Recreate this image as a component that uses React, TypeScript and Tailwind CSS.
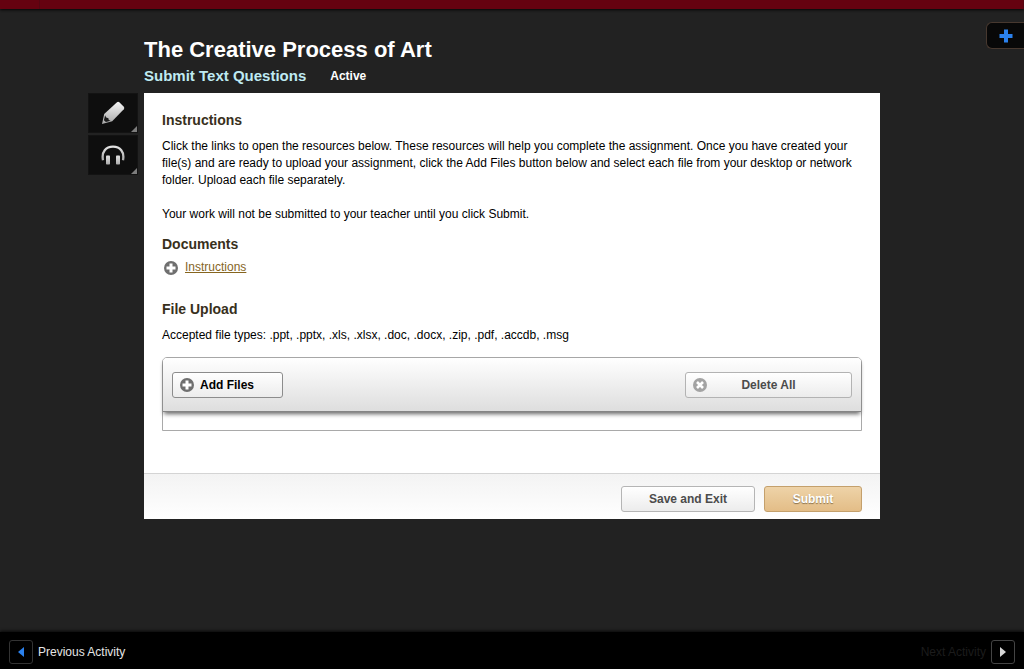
import { useState } from 'react';
import type { ReactNode } from 'react';

const FILE_TYPES = ['.ppt', '.pptx', '.xls', '.xlsx', '.doc', '.docx', '.zip', '.pdf', '.accdb', '.msg'];

// Icons
function PlusCircle() {
  return (
    <svg viewBox="0 0 14 14" className="w-[14px] h-[14px] shrink-0" aria-hidden="true">
      <circle cx="7" cy="7" r="7" fill="#6f6f6f" />
      <path d="M5.5 2.5h3v3h3v3h-3v3h-3v-3h-3v-3h3z" fill="#fff" />
    </svg>
  );
}

function CloseCircle() {
  return (
    <svg viewBox="0 0 14 14" className="w-[14px] h-[14px] shrink-0" aria-hidden="true">
      <circle cx="7" cy="7" r="7" fill="#a3a3a3" />
      <path d="M4 4l6 6M10 4l-6 6" stroke="#fff" strokeWidth="2.6" />
    </svg>
  );
}

function PencilIcon() {
  return (
    <svg viewBox="0 0 24 24" className="w-6 h-6" aria-hidden="true">
      <defs>
        <linearGradient id="pencil" x1="0" y1="0" x2="0" y2="1">
          <stop offset="0" stopColor="#f6f6f6" />
          <stop offset="1" stopColor="#a6a6a6" />
        </linearGradient>
      </defs>
      <path d="M16 1.2Q17.2.3 18.3 1.3L22.8 5.8Q23.8 7 22.8 8.2L11.2 20.2 1 23 3.2 13z" fill="url(#pencil)" />
      <path d="M4.1 14.2L2.9 19.2 4.9 21.1 9.6 19.8 7.8 19.1 7.4 17.2 5.2 16.6z" fill="#1c1c1c" />
    </svg>
  );
}

function HeadphonesIcon() {
  return (
    <svg viewBox="0 0 24 20" className="w-6 h-5" aria-hidden="true">
      <defs>
        <linearGradient id="phones" x1="0" y1="0" x2="0" y2="1">
          <stop offset="0" stopColor="#e2e2e2" />
          <stop offset="1" stopColor="#aaaaaa" />
        </linearGradient>
      </defs>
      <path d="M2 15.2C.3 6.500 5 1.700 12 1.700s11.700 4.800 10 13.500" fill="none" stroke="url(#phones)" strokeWidth="2.300" />
      <rect x="5" y="10.500" width="4" height="9" rx=".8" fill="url(#phones)" />
      <rect x="15" y="10.500" width="4" height="9" rx=".8" fill="url(#phones)" />
    </svg>
  );
}

function ToolButton({ label, children }: { label: string; children: ReactNode }) {
  return (
    <button aria-label={label} className="relative flex items-center justify-center w-[50px] h-10 bg-[#0e0e0e] border border-[#131313]">
      {children}
      <svg viewBox="0 0 6 6" className="absolute right-0 bottom-0 w-[6px] h-[6px]" aria-hidden="true">
        <path d="M6 0v6H0z" fill="#7d7d7d" />
      </svg>
    </button>
  );
}

function Heading({ children }: { children: ReactNode }) {
  return <h2 className="text-[14px] leading-5 font-bold text-[#38301c]">{children}</h2>;
}

const buttonBase = 'h-[26px] flex items-center border rounded-[3px] text-[12px] font-bold';

// Upload box
function UploadPanel() {
  const [files, setFiles] = useState<string[]>([]);

  return (
    <div className="mt-[13px] border border-[#a9a9a9] rounded-t-[5px]">
      <div className="h-[54px] px-[9px] flex items-center justify-between rounded-t-[4px] bg-gradient-to-b from-white to-[#dedede] border-b border-[#858585] shadow-[0_3px_4px_-1px_rgba(0,0,0,0.6)]">
        <button className={`${buttonBase} w-[111px] px-[7px] gap-[6px] border-[#8c8c8c] bg-gradient-to-b from-white to-[#ececec] text-black`}>
          <PlusCircle />
          Add Files
        </button>
        <button onClick={() => setFiles([])} className={`${buttonBase} w-[167px] px-[7px] border-[#b3b3b3] bg-gradient-to-b from-white to-[#ececec] text-[#4c4c4c]`}>
          <CloseCircle />
          <span className="flex-1 pr-[14px]">Delete All</span>
        </button>
      </div>
      <ul className="min-h-[18px]">
        {files.map(f => <li key={f} className="px-3 text-[12px]">{f}</li>)}
      </ul>
    </div>
  );
}

// Main Component
export default function App() {
  return (
    <div className="min-h-screen flex flex-col bg-[#222222] font-['Liberation_Sans',Arial,sans-serif] text-black">
      <div className="h-[9px] flex justify-between bg-[#650210] shadow-[0_1px_3px_rgba(0,0,0,0.9)]">
        <div className="w-10 border-r border-[#550511]" />
        <div className="w-[171px] border-r border-[#550511]" />
      </div>

      <main className="flex-1 grid grid-cols-[1fr_736px_1fr] grid-rows-[84px_auto] content-start">
        {/* Title */}
        <header className="col-start-2 pt-[27px]">
          <h1 className="text-[22px] leading-7 font-bold text-white">The Creative Process of Art</h1>
          <div className="flex items-center pt-[2px] gap-6 leading-5 font-bold">
            <p className="text-[15px] text-[#bfeaf2]">Submit Text Questions</p>
            <p className="text-[12px] text-white">Active</p>
          </div>
        </header>
        <div className="col-start-3 flex justify-end pt-[13px]">
          <button aria-label="Add" className="w-[38px] h-[27px] flex items-center justify-center bg-[#080808] border border-r-0 border-[#47382f] rounded-l-[6px]">
            <svg viewBox="0 0 14 14" className="w-[14px] h-[14px]" aria-hidden="true">
              <path d="M5 .5h4V5h4.500v4H9v4.500H5V9H.5V5H5z" fill="#2b81ed" />
            </svg>
          </button>
        </div>

        {/* Tools */}
        <aside className="col-start-1 flex flex-col items-end gap-[2px] pr-[6px]">
          <ToolButton label="Highlighter"><PencilIcon /></ToolButton>
          <ToolButton label="Read aloud"><HeadphonesIcon /></ToolButton>
        </aside>

        {/* Assignment */}
        <section className="bg-white self-start">
          <div className="px-[18px] pt-[17px] pb-[42px]">
            <Heading>Instructions</Heading>
            <div className="pt-2 text-[12px] leading-[17px]">
              <p>
                Click the links to open the resources below. These resources will help you complete the assignment. Once you have created your file(s) and are ready to upload your assignment, click the Add Files button below and select each file from your desktop or network folder. Upload each file separately.
              </p>
              <p className="pt-[17px]">Your work will not be submitted to your teacher until you click Submit.</p>
            </div>
            <div className="pt-[11px]">
              <Heading>Documents</Heading>
              <div className="flex items-center gap-[7px] pt-[5px] pl-[2px] text-[12px] leading-[17px]">
                <PlusCircle />
                <a href="#instructions" className="text-[#86651f] underline">Instructions</a>
              </div>
            </div>
            <div className="pt-[23px]">
              <Heading>File Upload</Heading>
              <p className="pt-2 text-[12px] leading-[17px]">Accepted file types: {FILE_TYPES.join(', ')}</p>
            </div>
            <UploadPanel />
          </div>
          <footer className="flex justify-end gap-[9px] px-[18px] pt-3 pb-[7px] border-t border-[#d4d4d4] bg-gradient-to-b from-[#f3f3f3] to-white">
            <button className={`${buttonBase} w-[134px] justify-center border-[#b5b5b5] bg-gradient-to-b from-white to-[#ececec] text-[#4c4c4c]`}>Save and Exit</button>
            <button className={`${buttonBase} w-[98px] justify-center border-[#c4a06c] bg-gradient-to-b from-[#eed3a8] to-[#e3bd87] text-white [text-shadow:0_1px_1px_#8a704a]`}>Submit</button>
          </footer>
        </section>
      </main>

      {/* Bottom navigation */}
      <nav className="h-[37px] px-[9px] pt-[2px] flex items-center justify-between bg-black shadow-[0_-1px_3px_rgba(0,0,0,0.8)] text-[12px]">
        <button className="flex items-center gap-[5px] text-[#e6e6e6]">
          <span className="w-6 h-6 flex items-center justify-center border border-[#333] rounded-[3px]">
            <svg viewBox="0 0 6 10" className="w-[6px] h-[10px]" aria-hidden="true"><path d="M6 0v10L0 5z" fill="#2b81ed" /></svg>
          </span>
          Previous Activity
        </button>
        <button className="flex items-center gap-[5px] text-[#1c1c1c]">
          Next Activity
          <span className="w-6 h-6 flex items-center justify-center border border-[#444] rounded-[3px]">
            <svg viewBox="0 0 6 10" className="w-[6px] h-[10px]" aria-hidden="true"><path d="M0 0v10l6-5z" fill="#d6d6d6" /></svg>
          </span>
        </button>
      </nav>
    </div>
  );
}
